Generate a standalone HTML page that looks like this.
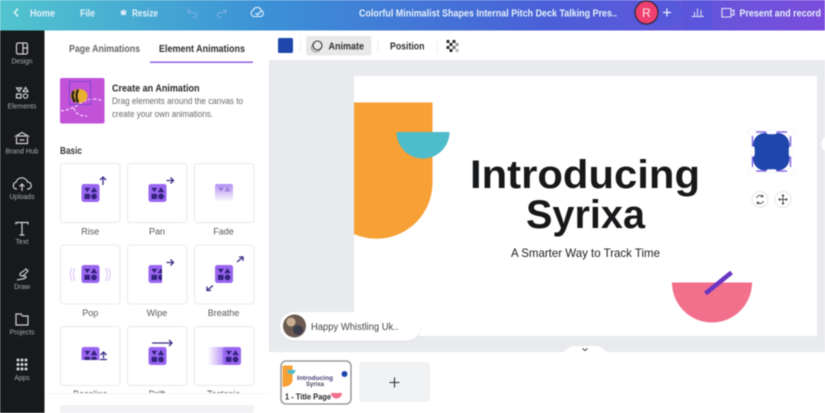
<!DOCTYPE html>
<html lang="en">
<head>
<meta charset="utf-8">
<title>Canva editor</title>
<style>
html,body{margin:0;padding:0;width:825px;height:413px;overflow:hidden;background:#fff}
svg{display:block;filter:blur(.5px)}
svg svg{filter:none}
text{font-family:"Liberation Sans",sans-serif}
.tb{fill:#e4f1fa;font-size:10.500px;font-weight:bold}
.sl{fill:#a9abae;font-size:7.500px;text-anchor:middle}
.si{fill:none;stroke:#d0d1d3;stroke-width:1.200}
.tl{fill:#fff;stroke:#e9ebed;stroke-width:1.100}
.lb{fill:#55585c;font-size:9px;text-anchor:middle}
.ar{fill:none;stroke:#3d2a85;stroke-width:1.300}
</style>
</head>
<body>
<svg width="825" height="413" viewBox="0 0 825 413" xmlns="http://www.w3.org/2000/svg">
<defs>
<linearGradient id="top" x1="0" y1="0" x2="825" y2="0" gradientUnits="userSpaceOnUse">
<stop offset="0" stop-color="#52c5cf"/><stop offset=".33" stop-color="#3c90d6"/><stop offset=".66" stop-color="#4a60d8"/><stop offset="1" stop-color="#7b4ddc"/>
</linearGradient>
<linearGradient id="trail" x1="0" x2="1" y1="0" y2="0"><stop offset="0" stop-color="#9a66f0" stop-opacity="0"/><stop offset="1" stop-color="#9a66f0" stop-opacity=".75"/></linearGradient>
<linearGradient id="fade" x1="0" x2="0" y1="0" y2="1"><stop offset="0" stop-color="#a57af0" stop-opacity=".85"/><stop offset="1" stop-color="#a57af0" stop-opacity="0"/></linearGradient>
<symbol id="ic" viewBox="0 0 18 18" overflow="visible">
<rect width="18" height="18" rx="2.500" fill="#9a66f0"/>
<path d="M2.800 3.800h6l-3 4.400zM12.500 3l3.300 5.200H9.200z" fill="#33237e"/>
<rect x="3" y="9.800" width="5.500" height="5.200" fill="#33237e"/>
<circle cx="12.500" cy="12.400" r="2.900" fill="#33237e"/>
</symbol>
</defs>

<!-- backgrounds -->
<rect width="825" height="413" fill="#fff"/>
<rect x="269" y="60" width="556" height="292" fill="#e9eaee"/>
<rect width="825" height="30.500" fill="url(#top)"/>
<rect y="30.500" width="44.500" height="383" fill="#18191b"/>

<!-- top bar -->
<path d="M18 8.500l-3.500 4 3.500 4" fill="none" stroke="#dff3f6" stroke-width="1.500"/>
<text class="tb" x="30" y="16.500" textLength="25" lengthAdjust="spacingAndGlyphs">Home</text>
<text class="tb" x="80" y="16.500" textLength="15" lengthAdjust="spacingAndGlyphs">File</text>
<path d="M120.500 10l1.500 1.200 1.500-2 1.500 2 1.500-1.200-.8 5h-4.400z" fill="#dcecf8"/>
<text class="tb" x="132" y="16.500" textLength="26" lengthAdjust="spacingAndGlyphs">Resize</text>
<path d="M188 9v3.500h7a3 3 0 0 1 0 5h-3M188 12.500l3-3" fill="none" stroke="#7cb1e2" stroke-width="1"/>
<path d="M226 9v3.500h-7a3 3 0 0 0 0 5h3M226 12.500l-3-3" fill="none" stroke="#7cb1e2" stroke-width="1"/>
<path d="M254.500 16.500h6a3 3 0 0 0 .8-5.800 4.200 4.200 0 0 0-8-.6 3.300 3.300 0 0 0 1.200 6.400zM255.500 13l2 1.800 3.500-3.800" fill="none" stroke="#e4f1fa" stroke-width="1.100"/>
<text class="tb" x="359" y="16.500" textLength="258" lengthAdjust="spacingAndGlyphs">Colorful Minimalist Shapes Internal Pitch Deck Talking Pres..</text>
<rect x="632" y="0" width="50" height="26" rx="13" fill="#5559da"/>
<rect x="682" y="0" width="30" height="30.500" fill="#5a55da"/>
<circle cx="646.500" cy="12.500" r="11.500" fill="#ef3f6e" stroke="#33283f" stroke-width="1.300"/>
<text x="646.500" y="17" fill="#fbe9ee" font-size="12" text-anchor="middle">R</text>
<path d="M667 8.500v8M663 12.500h8" stroke="#eef0fb" stroke-width="1.200"/>
<path d="M691.500 16.500h12.500M694.500 16v-4M697.500 16V8.500M701 16v-6" fill="none" stroke="#dfe2f8" stroke-width="1"/>
<path d="M722 8.500h9v8.500h-9zM731 11l3-.8v5l-3-.8" fill="none" stroke="#e6e3fa" stroke-width="1.100"/>
<text class="tb" x="739.500" y="16.500" textLength="81.500" lengthAdjust="spacingAndGlyphs">Present and record</text>

<!-- sidebar -->
<g class="si">
<rect x="16.500" y="43" width="11" height="11" rx="1.500"/><path d="M23 43v11M23 48h4.500"/>
<path d="M16.500 88h5l-2.500 3.500zM25.500 87.500l2.500 4h-5zM16.500 94h4.500v4h-4.500z"/><circle cx="25.500" cy="96" r="2.200"/>
<path d="M22 132.500l6 3.500h-12zM16.500 137v6.500h11V137M19.500 140h5"/>
<path d="M17 189h-1a3.500 3.500 0 0 1 0-6.800 6 6 0 0 1 11.500-.2 3.500 3.500 0 0 1 .5 7h-1M22 191v-7M19.500 186.500l2.500-2.500 2.500 2.500"/>
<path d="M16 224.500v-2h12v2M22 222.500v12.500M19.500 235h5"/>
<path d="M17 280c4-1 9-1 9-3s-5 0-6-2 3-3 6-6l2 2c-3 3-4 4-5 5"/>
<path d="M16 314h5l1.500 2H28v9H16z"/>
</g>
<g fill="#d5d6d8">
<circle cx="18" cy="360" r="1.500"/><circle cx="22" cy="360" r="1.500"/><circle cx="26" cy="360" r="1.500"/>
<circle cx="18" cy="364.500" r="1.500"/><circle cx="22" cy="364.500" r="1.500"/><circle cx="26" cy="364.500" r="1.500"/>
<circle cx="18" cy="369" r="1.500"/><circle cx="22" cy="369" r="1.500"/><circle cx="26" cy="369" r="1.500"/>
</g>
<text class="sl" x="22" y="63.500" textLength="21" lengthAdjust="spacingAndGlyphs">Design</text>
<text class="sl" x="22" y="108.500" textLength="29" lengthAdjust="spacingAndGlyphs">Elements</text>
<text class="sl" x="22" y="153.500" textLength="33" lengthAdjust="spacingAndGlyphs">Brand Hub</text>
<text class="sl" x="22" y="199" textLength="25" lengthAdjust="spacingAndGlyphs">Uploads</text>
<text class="sl" x="22" y="244" textLength="13" lengthAdjust="spacingAndGlyphs">Text</text>
<text class="sl" x="22" y="289" textLength="16" lengthAdjust="spacingAndGlyphs">Draw</text>
<text class="sl" x="22" y="334.500" textLength="25" lengthAdjust="spacingAndGlyphs">Projects</text>
<text class="sl" x="22" y="380" textLength="15" lengthAdjust="spacingAndGlyphs">Apps</text>

<!-- panel -->
<text x="69" y="52" fill="#63666a" font-size="10.500" font-weight="bold" textLength="71" lengthAdjust="spacingAndGlyphs">Page Animations</text>
<text x="159" y="52" fill="#2a2d31" font-size="10.500" font-weight="bold" textLength="86" lengthAdjust="spacingAndGlyphs">Element Animations</text>
<rect x="150" y="61.500" width="103" height="1.400" fill="#8a55e6"/>
<rect x="60" y="78" width="44.500" height="45.500" rx="2" fill="#c252d8"/>
<path d="M61 111c8-1 14-4 20-8 5-3 12-6 22-2M74 108c1 5 5 8 13 8" fill="none" stroke="#f4d6f8" stroke-width="1.300" stroke-dasharray="3 2"/>
<rect x="69.500" y="81.500" width="21" height="23" fill="none" stroke="#7c45d8" stroke-width="1"/>
<ellipse cx="79" cy="96" rx="8.500" ry="7" fill="#e8b030"/>
<path d="M74 91c-2 3-2 7 1 11M78 89.500c-2 4-2 9 0 13" fill="none" stroke="#2b2218" stroke-width="2.400"/>
<text x="112" y="91.500" fill="#26282c" font-size="10.500" font-weight="bold" textLength="87.500" lengthAdjust="spacingAndGlyphs">Create an Animation</text>
<text x="112" y="104" fill="#666a6f" font-size="9" textLength="131" lengthAdjust="spacingAndGlyphs">Drag elements around the canvas to</text>
<text x="112" y="117" fill="#666a6f" font-size="9" textLength="101" lengthAdjust="spacingAndGlyphs">create your own animations.</text>
<text x="60" y="154" fill="#33363a" font-size="10.500" font-weight="bold" textLength="22" lengthAdjust="spacingAndGlyphs">Basic</text>

<!-- tiles row 1 -->
<rect class="tl" x="60.500" y="163.500" width="59.500" height="59" rx="3"/>
<rect class="tl" x="127.500" y="163.500" width="59.500" height="59" rx="3"/>
<rect class="tl" x="194.500" y="163.500" width="59.500" height="59" rx="3"/>
<use href="#ic" x="81.500" y="184" width="18" height="18"/>
<path class="ar" d="M103 185v-8M100 180l3-3 3 3"/>
<use href="#ic" x="148.500" y="184" width="18" height="18"/>
<path class="ar" d="M166.500 180.500h7M170.500 177.500l3 3-3 3"/>
<rect x="215" y="184" width="18" height="18" rx="2" fill="url(#fade)"/>
<path d="M218 187.500h6l-3 4zM227.500 187l3 4.500h-6z" fill="#7456c4" opacity=".55"/>
<text class="lb" x="90.300" y="234.500">Rise</text>
<text class="lb" x="157" y="234.500">Pan</text>
<text class="lb" x="223.500" y="234.500">Fade</text>

<!-- tiles row 2 -->
<rect class="tl" x="60.500" y="245" width="59.500" height="59" rx="3"/>
<rect class="tl" x="127.500" y="245" width="59.500" height="59" rx="3"/>
<rect class="tl" x="194.500" y="245" width="59.500" height="59" rx="3"/>
<use href="#ic" x="81.500" y="265" width="18" height="18"/>
<path d="M75 268c-2 4-2 9 0 13M72 268c-2 4-2 9 0 13M105.500 268c2 4 2 9 0 13M108.500 268c2 4 2 9 0 13" fill="none" stroke="#d6bdf6" stroke-width="1"/>
<svg x="148" y="265" width="14" height="18" viewBox="0 0 14 18"><use href="#ic" x=".5" width="18" height="18"/></svg>
<path class="ar" d="M166.500 262.500h7M170.500 259.500l3 3-3 3"/>
<use href="#ic" x="215" y="265" width="18" height="18"/>
<path class="ar" d="M237 262l6-5M239 257h4v4"/>
<path class="ar" d="M213 285.500l-6 5M211 290.500h-4v-4"/>
<text class="lb" x="90.300" y="316">Pop</text>
<text class="lb" x="157" y="316">Wipe</text>
<text class="lb" x="223.500" y="316">Breathe</text>

<!-- tiles row 3 -->
<rect class="tl" x="60.500" y="326.500" width="59.500" height="59" rx="3"/>
<rect class="tl" x="127.500" y="326.500" width="59.500" height="59" rx="3"/>
<rect class="tl" x="194.500" y="326.500" width="59.500" height="59" rx="3"/>
<svg x="81" y="347" width="19" height="13" viewBox="0 0 19 13"><use href="#ic" x=".5" width="18" height="18"/></svg>
<path class="ar" d="M103.500 358.500v-6M100.500 355l3-3 3 3M100 359.500h7"/>
<use href="#ic" x="148.500" y="347" width="18" height="18"/>
<path class="ar" d="M152 343h20M169 340l3 3-3 3"/>
<rect x="208" y="347" width="16" height="18" fill="url(#trail)"/>
<use href="#ic" x="223" y="347" width="18" height="18"/>
<text class="lb" x="90.300" y="397">Baseline</text>
<text class="lb" x="157" y="397">Drift</text>
<text class="lb" x="223.500" y="397">Tectonic</text>
<rect x="45" y="393" width="224" height="20" fill="#fff"/>
<rect x="45" y="393.500" width="224" height=".7" fill="#f1f2f3"/>
<rect x="60" y="405" width="194" height="8" rx="2" fill="#f1f2f4"/>

<!-- toolbar -->
<rect x="278" y="38" width="15" height="15" rx="1.500" fill="#1e46ab"/>
<rect x="300" y="38" width=".8" height="15" fill="#eee"/>
<rect x="306" y="36" width="65.500" height="19.500" rx="2.500" fill="#e8e8e8"/>
<circle cx="316" cy="47.500" r="4.500" fill="none" stroke="#8a8c90" stroke-width="1"/>
<circle cx="317.500" cy="45.500" r="4.500" fill="#e8e8e8" stroke="#35383c" stroke-width="1.100"/>
<text x="328.500" y="49.500" fill="#2b2e32" font-size="10.500" font-weight="bold" textLength="35.500" lengthAdjust="spacingAndGlyphs">Animate</text>
<rect x="377.500" y="38" width=".8" height="15" fill="#eee"/>
<text x="390" y="49.500" fill="#2b2e32" font-size="10.500" font-weight="bold" textLength="34.500" lengthAdjust="spacingAndGlyphs">Position</text>
<rect x="437" y="38" width=".8" height="15" fill="#eee"/>
<g fill="#2b2d30">
<rect x="446.500" y="40" width="3" height="3"/><rect x="452.500" y="40" width="3" height="3"/>
<rect x="449.500" y="43" width="3" height="3"/><rect x="455.500" y="43" width="3" height="3" opacity=".5"/>
<rect x="446.500" y="46" width="3" height="3"/><rect x="452.500" y="46" width="3" height="3" opacity=".7"/>
<rect x="449.500" y="49" width="3" height="3"/><rect x="455.500" y="49" width="3" height="3" opacity=".35"/>
</g>

<!-- canvas -->
<rect x="354" y="76" width="463" height="260" fill="#fff"/>
<path d="M354 102.500h78.500V182a56 56 0 0 1-78.500 52z" fill="#f7a035"/>
<path d="M396.500 132h53a26.500 26.500 0 0 1-53 0z" fill="#4dbccb"/>
<text x="585" y="188" fill="#17181a" font-size="40" font-weight="bold" text-anchor="middle" textLength="230" lengthAdjust="spacingAndGlyphs">Introducing</text>
<text x="585.500" y="228" fill="#17181a" font-size="40" font-weight="bold" text-anchor="middle" textLength="119" lengthAdjust="spacingAndGlyphs">Syrixa</text>
<text x="585.500" y="257" fill="#1d1e20" font-size="12" text-anchor="middle" textLength="149" lengthAdjust="spacingAndGlyphs">A Smarter Way to Track Time</text>
<path d="M672 282.500h80a40 40 0 0 1-80 0z" fill="#f2708c"/>
<path d="M705.500 293.500l26-21" stroke="#6a35c4" stroke-width="4.500"/>

<!-- selected blue shape -->
<rect x="753" y="133" width="36.500" height="37.500" rx="12" fill="#1e46ab"/>
<rect x="752.500" y="132" width="38" height="39" fill="none" stroke="#7a55e6" stroke-width="1.300"/>
<g fill="#fff" stroke="#efeef6" stroke-width=".5">
<circle cx="752" cy="132" r="4"/><circle cx="791" cy="132" r="4"/><circle cx="752" cy="171" r="4"/><circle cx="791" cy="171" r="4"/>
<rect x="766.500" y="130.500" width="10" height="3.500" rx="1.750"/><rect x="766.500" y="169.500" width="10" height="3.500" rx="1.750"/>
<rect x="751" y="146.500" width="3.500" height="10" rx="1.750"/><rect x="789" y="146.500" width="3.500" height="10" rx="1.750"/>
</g>
<circle cx="760" cy="199.500" r="8" fill="#fff" stroke="#e6e6e8"/>
<circle cx="783" cy="199.500" r="8" fill="#fff" stroke="#e6e6e8"/>
<path d="M756.500 198a3.800 3.800 0 0 1 6.300-1.500M763.500 201a3.800 3.800 0 0 1-6.300 1.500M762.800 194.800v2h-2M757.200 204.200v-2h2" fill="none" stroke="#45484c" stroke-width=".9"/>
<path d="M783 195v9M778.500 199.500h9M781.800 196l1.200-1.200 1.200 1.200M781.800 203l1.200 1.200 1.200-1.200M780 198.300l-1.200 1.200 1.200 1.200M786 198.300l1.200 1.200-1.200 1.200" fill="none" stroke="#45484c" stroke-width=".9"/>
<circle cx="829" cy="144" r="8" fill="#fff"/>

<!-- chip -->
<rect x="280" y="312.500" width="141" height="28.500" rx="14.250" fill="#e2e3e7" transform="translate(0 1)"/>
<rect x="280" y="312" width="141" height="28.500" rx="14.250" fill="#fff"/>
<circle cx="294.500" cy="326" r="11.500" fill="#6b5a50"/>
<circle cx="291" cy="322" r="4.500" fill="#c9ad92"/>
<circle cx="298" cy="330" r="5" fill="#3c3d4c"/>
<text x="311" y="330" fill="#43464a" font-size="10" textLength="87.500" lengthAdjust="spacingAndGlyphs">Happy Whistling Uk..</text>

<!-- chevron hump -->
<path d="M562 352c4-1 6-6 13-6h20c7 0 9 5 13 6z" fill="#fff"/>
<path d="M582.500 348.500l2.500 2 2.500-2" fill="none" stroke="#3b3d41" stroke-width="1"/>

<!-- film strip -->
<rect x="281" y="361" width="70" height="43" rx="5" fill="#fff" stroke="#8a8c8e" stroke-width="1.300"/>
<path d="M282.500 365.500h10v16c-2 4-5 5-10 5.500z" fill="#f7a035"/>
<path d="M287 370h8.500a4.250 4.250 0 0 1-8.500 0z" fill="#4dbccb"/>
<text x="315" y="380" fill="#4b3f79" font-size="6" font-weight="bold" text-anchor="middle" textLength="36" lengthAdjust="spacingAndGlyphs">Introducing</text>
<text x="315" y="386" fill="#4b4560" font-size="6" font-weight="bold" text-anchor="middle" textLength="18" lengthAdjust="spacingAndGlyphs">Syrixa</text>
<circle cx="344.500" cy="374" r="3" fill="#1e46ab"/>
<path d="M331 393h11a5.500 5.500 0 0 1-11 0z" fill="#f2708c"/>
<text x="285" y="399.500" fill="#25272a" font-size="8.500" font-weight="bold" textLength="46" lengthAdjust="spacingAndGlyphs">1 - Title Page</text>
<rect x="359.500" y="362" width="70.500" height="40" rx="3" fill="#f1f2f4"/>
<path d="M394.500 377.500v10M389.500 382.500h10" stroke="#2c2e32" stroke-width="1.100"/>
</svg>
</body>
</html>
